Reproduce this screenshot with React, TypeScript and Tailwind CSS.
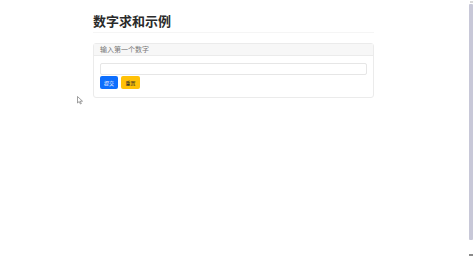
import React from 'react';

export default function App() {
  return (
    <div
      className="relative flex h-[261px] w-[474px] overflow-hidden bg-white text-[#212529]"
      style={{ fontFamily: '"Noto Sans CJK SC", "Noto Sans", sans-serif' }}
    >
      <div className="flex-1 pl-[93px] pt-[12px]">
        <div className="w-[281px]">
          <h1 className="border-b border-[#f5f5f5] pb-[2px] text-[13px] font-bold leading-[18px] text-[#2a2a2a]">
            数字求和示例
          </h1>
          <div className="mt-[10px] rounded-[3px] border border-[#ebebeb]">
            <div className="flex h-[12px] items-center border-b border-[#ebebeb] bg-[#f7f7f7] pl-[6px] text-[7px] leading-none text-[#777]">
              输入第一个数字
            </div>
            <div className="px-[6px] pb-[8px] pt-[7px]">
              <div className="h-[12px] w-full rounded-[2px] border border-[#e6e6e6] bg-white" />
              <div className="mt-[1px] flex gap-[3px]">
                <button className="flex h-[13px] w-[18px] items-center justify-center rounded-[2px] bg-[#0d6efd] text-[5px] leading-none text-white">
                  提交
                </button>
                <button className="flex h-[13px] w-[19px] items-center justify-center rounded-[2px] bg-[#ffc107] text-[5px] leading-none text-[#212529]">
                  重置
                </button>
              </div>
            </div>
          </div>
        </div>
      </div>

      <div className="flex w-[6px] flex-col items-center bg-white py-[1px]">
        <div className="h-[2px] w-[3px] bg-[#d8d8d8]" />
        <div className="mt-[1px] w-[4px] flex-1 rounded-[1px] bg-[#c8c8d8]" />
        <div className="mb-[4px] mt-[14px] h-[2px] w-[4px] bg-[#8a8a8a]" />
      </div>

      <svg className="absolute left-[77px] top-[96px]" width="7" height="9" viewBox="0 0 7 9">
        <path d="M0.5 0.5 L0.5 7 L2.2 5.5 L3.4 8 L4.3 7.6 L3.2 5.2 L5.5 5.2 Z" fill="#fff" stroke="#777" strokeWidth="0.7" />
      </svg>
    </div>
  );
}
